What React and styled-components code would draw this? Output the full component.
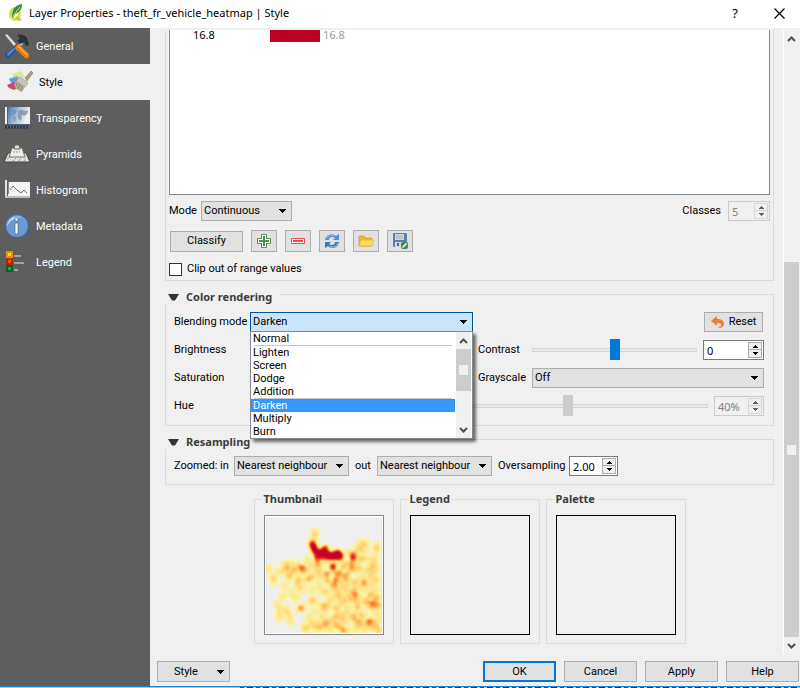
import React from "react";
import styled, { createGlobalStyle, css } from "styled-components";

const UI = `Roboto, "Liberation Sans", sans-serif`;
const WIDE = `"Noto Sans", "Open Sans", sans-serif`;

const Global = createGlobalStyle`
  * { box-sizing: border-box; }
  body { margin: 0; background: #f0f0f0; font: 11px/14px ${UI}; color: #000; }
  button, input, select { font: inherit; color: inherit; margin: 0; }
`;

const Window = styled.div`
  min-height: 100vh;
  display: flex;
  flex-direction: column;
  background: #f0f0f0;
  overflow: hidden;
`;

const TitleBar = styled.header`
  height: 28px;
  background: #fff;
  display: flex;
  align-items: center;
  padding: 0 13px 2px 8px;
`;
const TitleText = styled.h1`
  flex: 1;
  margin: 0 0 0 5px;
  font: 400 11px/16px ${WIDE};
  white-space: nowrap;
`;
const CaptionButton = styled.button`
  width: 16px;
  height: 20px;
  margin-left: 28px;
  padding: 0;
  border: 0;
  background: none;
  font: 400 13px/20px ${WIDE};
  display: grid;
  place-items: center;
`;

const Body = styled.div`
  flex: 1;
  display: flex;
`;
const Sidebar = styled.nav`
  width: 150px;
  flex: none;
  background: #5e5e5e;
`;
const NavItem = styled.button`
  width: 100%;
  height: 36px;
  border: 0;
  padding: 2px 0 0 ${(p) => (p.$active ? 7 : 4)}px;
  display: flex;
  align-items: center;
  gap: 6px;
  background: ${(p) => (p.$active ? "#f0f0f0" : "transparent")};
  color: ${(p) => (p.$active ? "#000" : "#fff")};
  text-align: left;
  svg { display: block; flex: none; margin-bottom: 2px; }
`;

const Main = styled.main`
  flex: 1;
  min-width: 0;
  display: flex;
  flex-direction: column;
`;
const ScrollArea = styled.div`
  flex: 1;
  display: flex;
  padding: 2px 1px 0 0;
`;
const Content = styled.div`
  flex: 1;
  min-width: 0;
  padding: 0 9px 10px 15px;
`;

const Panel = styled.section`
  border: 1px solid #dcdcdc;
  border-top: 0;
  padding: 0 3px 4px;
`;
const Classes = styled.div`
  height: 165px;
  background: #fff;
  border: 1px solid #828790;
  border-top: 0;
  display: flex;
  align-items: flex-start;
  padding-left: 23px;
  font-family: ${WIDE};
`;
const Value = styled.span`
  width: 77px;
  line-height: 10px;
`;
const Swatch = styled.span`
  width: 50px;
  height: 12px;
  background: #bd0026;
  margin-right: 3px;
`;
const ClassLabel = styled.span`
  color: #a0a0a0;
  line-height: 10px;
`;

const Row = styled.div`
  display: flex;
  align-items: center;
  margin-top: ${(p) => p.$top || 0}px;
  padding-left: ${(p) => p.$indent || 0}px;
  gap: ${(p) => p.$gap || 0}px;
`;
const Spacer = styled.span`
  flex: 1;
`;
const Label = styled.label`
  white-space: nowrap;
  width: ${(p) => (p.$w ? p.$w + "px" : "auto")};
  padding-left: ${(p) => p.$indent || 0}px;
`;

const buttonLook = css`
  background: #e1e1e1;
  border: 1px solid #adadad;
  border-radius: 0;
`;
const Button = styled.button`
  ${buttonLook}
  width: 73px;
  height: 21px;
  padding: 0;
  display: flex;
  align-items: center;
  justify-content: center;
  ${(p) => p.$primary && css`border: 2px solid #0078d7;`}
`;
const MenuButton = styled(Button)`
  justify-content: space-between;
  padding: 0 5px 0 16px;
`;
const IconButton = styled(Button)`
  width: 26px;
  height: 22px;
`;
const ResetButton = styled(Button)`
  width: 59px;
  height: 20px;
  gap: 5px;
`;

const SelectBox = styled.span`
  display: grid;
  width: ${(p) => (p.$w ? p.$w + "px" : "100%")};
  height: 20px;
  align-items: center;
  svg { grid-area: 1 / 1; justify-self: end; margin-right: 6px; pointer-events: none; }
`;
const NativeSelect = styled.select`
  grid-area: 1 / 1;
  ${buttonLook}
  appearance: none;
  width: 100%;
  height: 20px;
  padding: 0 14px 0 2px;
  line-height: 16px;
  ${(p) => p.$open && css`background: #cce4f7; border-color: #005499;`}
`;

const Check = styled.input`
  appearance: none;
  width: 13px;
  height: 13px;
  border: 1px solid #333;
  background: #fff;
`;

const SpinFrame = styled.span`
  width: ${(p) => p.$w}px;
  height: 20px;
  flex: none;
  display: flex;
  padding: 1px 1px 1px 2px;
  border: 1px solid ${(p) => (p.$off ? "#cccccc" : "#7a7a7a")};
  background: ${(p) => (p.$off ? "#f0f0f0" : "#fff")};
  color: ${(p) => (p.$off ? "#838383" : "#000")};
`;
const SpinInput = styled.input`
  flex: 1;
  min-width: 0;
  border: 0;
  padding: 2px 0 0 1px;
  background: transparent;
  font-family: ${WIDE};
`;
const SpinButtons = styled.span`
  width: 14px;
  display: grid;
  grid-template-rows: 1fr 1fr;
`;
const SpinButton = styled.button`
  border: 1px solid ${(p) => (p.disabled ? "#d6d6d6" : "#acacac")};
  background: #f0f0f0;
  padding: 0;
  display: grid;
  place-items: center;
  & + & { border-top: 0; }
`;

const GroupHeader = styled.div`
  height: 14px;
  margin-top: 9px;
  display: flex;
  align-items: center;
  padding-left: 3px;
`;
const Collapse = styled.button`
  border: 0;
  padding: 0;
  background: none;
  width: 18px;
  height: 14px;
  display: flex;
  align-items: center;
`;
const GroupTitle = styled.h2`
  margin: 0 8px 0 0;
  font: 700 11px/14px ${WIDE};
  color: #3c3c3c;
`;
const GroupLine = styled.span`
  flex: 1;
  height: 10px;
  align-self: flex-end;
  border: 1px solid #dcdcdc;
  border-width: 1px 1px 0 0;
`;
const GroupBody = styled.div`
  border: 1px solid #dcdcdc;
  border-top: 0;
  padding: ${(p) => p.$pad};
`;
const RenderGrid = styled.div`
  display: grid;
  grid-template-columns: 76px minmax(0, 223fr) 59px minmax(0, 232fr);
  grid-auto-rows: 20px;
  row-gap: 8px;
  align-items: center;
`;
const Combo = styled.div`
  position: relative;
`;
const Wide = styled.div`
  grid-column: ${(p) => p.$cols};
  display: flex;
  align-items: center;
  gap: 6px;
`;
const EndCell = styled.div`
  grid-column: 3 / 5;
  display: flex;
  justify-content: flex-end;
  padding-right: 1px;
`;

const Slider = styled.input`
  appearance: none;
  flex: 1;
  width: 100%;
  min-width: 0;
  height: 20px;
  background: none;
  &::-webkit-slider-runnable-track {
    height: 4px;
    background: #e7eaea;
    border: 1px solid #d6d6d6;
  }
  &::-webkit-slider-thumb {
    appearance: none;
    width: 10px;
    height: 21px;
    margin-top: -10px;
    background: ${(p) => (p.disabled ? "#cccccc" : "#007ad9")};
  }
`;

const Popup = styled.div`
  position: absolute;
  z-index: 2;
  top: 19px;
  left: 0;
  right: 0;
  display: flex;
  background: #fff;
  border: 1px solid #828790;
  padding-right: 1px;
  box-shadow: 3px 3px 3px rgba(0, 0, 0, 0.55);
`;
const Options = styled.ul`
  flex: 1;
  margin: 0;
  padding: 0 1px 0 0;
  list-style: none;
`;
const Option = styled.li`
  height: 13px;
  line-height: 13px;
  padding-left: 2px;
  ${(p) => p.$on && css`
    background: #3399ff;
    color: #fff;
    outline: 1px dotted #cc6600;
    outline-offset: -1px;
  `}
`;
const Separator = styled.li`
  height: 1px;
  margin: 0 3px;
  background: #c8c8c8;
`;
const Bar = styled.div`
  width: 15px;
  flex: none;
  display: flex;
  flex-direction: column;
  align-items: center;
  background: #f0f0f0;
`;
const PageBar = styled(Bar)`
  width: 16px;
  border-left: 1px solid #fff;
`;
const BarArrow = styled.button`
  width: 15px;
  height: 17px;
  padding: 0;
  border: 0;
  background: none;
  display: grid;
  place-items: center;
`;
const Thumb = styled.div`
  width: 15px;
  height: ${(p) => (p.$h ? p.$h + "px" : "auto")};
  flex: ${(p) => (p.$h ? "none" : p.$grow)};
  background: #cdcdcd;
  display: grid;
  place-items: center;
`;
const Track = styled.div`
  flex: ${(p) => p.$grow};
`;
const Grip = styled.span`
  width: 9px;
  height: 10px;
  background: #f0f0f0;
`;

const Previews = styled.div`
  display: flex;
  justify-content: center;
  gap: 6px;
  margin-top: 7px;
`;
const Preview = styled.fieldset`
  width: 140px;
  margin: 0;
  padding: 9px 9px 8px;
  border: 1px solid #dcdcdc;
  legend {
    font: 700 11px/14px ${WIDE};
    color: #3c3c3c;
    padding: 0 2px;
    margin-left: -2px;
  }
`;
const Canvas = styled.div`
  height: 120px;
  border: 1px solid ${(p) => (p.$soft ? "#828790" : "#000")};
  background: #f0f0f0;
  ${(p) => p.$soft && css`padding: 1px; background: #fff;`}
  svg { display: block; width: 100%; height: 100%; }
`;

const Footer = styled.footer`
  display: flex;
  gap: 8px;
  padding: 7px 1px 4px 7px;
`;
const BottomEdge = styled.div`
  height: 2px;
  border-top: 1px solid #1883d7;
  background: linear-gradient(90deg, #b9c9d6 0 240px, transparent 240px),
    repeating-linear-gradient(90deg, #3a444d 0 4px, #b9c9d6 4px 7px, #1c2228 7px 13px, #b9c9d6 13px 16px);
`;

const Down = () => (
  <svg width="7" height="4" viewBox="0 0 7 4" shapeRendering="crispEdges">
    <path d="M0 0h7v1H0zM1 1h5v1H1zM2 2h3v1H2zM3 3h1v1H3z" fill="#000" />
  </svg>
);
const Tiny = ({ up, color }) => (
  <svg width="5" height="3" viewBox="0 0 5 3" shapeRendering="crispEdges">
    <path d={up ? "M0 2h5v1H0zM1 1h3v1H1zM2 0h1v1H2z" : "M0 0h5v1H0zM1 1h3v1H1zM2 2h1v1H2z"} fill={color} />
  </svg>
);
const Chevron = ({ up }) => (
  <svg width="9" height="6" viewBox="0 0 9 6">
    <path d={up ? "M1 5l3.500-3.500L8 5" : "M1 1l3.500 3.500L8 1"} fill="none" stroke="#505050" strokeWidth="2" />
  </svg>
);

function Select({ id, w, value, open }) {
  return (
    <SelectBox $w={w}>
      <NativeSelect id={id} $open={open} defaultValue={value}>
        <option>{value}</option>
      </NativeSelect>
      <Down />
    </SelectBox>
  );
}

function Spin({ id, w, value, off, label }) {
  const color = off ? "#606060" : "#000";
  return (
    <SpinFrame $w={w} $off={off}>
      <SpinInput id={id} aria-label={label} defaultValue={value} disabled={off} />
      <SpinButtons>
        <SpinButton disabled={off} aria-label="Increase"><Tiny up color={color} /></SpinButton>
        <SpinButton disabled={off} aria-label="Decrease"><Tiny color={color} /></SpinButton>
      </SpinButtons>
    </SpinFrame>
  );
}

function Group({ title, pad, children }) {
  return (
    <section>
      <GroupHeader>
        <Collapse aria-label={"Collapse " + title}>
          <svg width="11" height="7" viewBox="0 0 11 7"><path d="M0 0h11L7 6.500H4z" fill="#333" /></svg>
        </Collapse>
        <GroupTitle>{title}</GroupTitle>
        <GroupLine />
      </GroupHeader>
      <GroupBody $pad={pad}>{children}</GroupBody>
    </section>
  );
}

const icons = {
  General: (
    <svg width="26" height="26" viewBox="0 0 26 26">
      <path d="M1 2l2-1 9 10-2 2z" fill="#e4e4e4" stroke="#888" strokeWidth=".5" />
      <path d="M17 9l2 2-7 7-2-2z" fill="#bdb8b0" />
      <path d="M13 2c5-1 8 0 10 3l2 7-3 1-2-4-4 2-3-3 3-3z" fill="#2d3030" />
      <path d="M10 14l3 3-8 8c-3 1-5-1-4-4z" fill="#1d5aa6" />
      <path d="M10 15l1 1-7 7-1-2z" fill="#5c93d2" />
      <path d="M12 13l3-2 10 10c1 3-1 5-4 4L11 15z" fill="#f07d0a" />
      <path d="M14 13l9 9" stroke="#ffb65c" strokeWidth="1.500" />
    </svg>
  ),
  Style: (
    <svg width="26" height="24" viewBox="0 0 26 24">
      <path d="M5 4l9-3 4 6-9 4z" fill="#dbe6a4" />
      <path d="M2 9l8-4 5 6-9 4z" fill="#b5cf94" />
      <path d="M2 9l8-2 4 6-8 3z" fill="#5f9fdf" />
      <path d="M0 15l7-3 6 5-6 3-5-2z" fill="#cf4a70" />
      <path d="M18 8l6-7 2 2-6 8z" fill="#a79e83" stroke="#8c8570" strokeWidth=".6" />
      <path d="M13 7l8 6-3 4-9-6z" fill="#cbc6b8" stroke="#908b7c" strokeWidth=".6" />
      <path d="M9 11l9 6-3 5c-4-1-7-4-8-7z" fill="#b3ae98" />
      <path d="M10 13l-1 3m4-2l-2 5m4-3l-1 4" stroke="#8a846e" />
    </svg>
  ),
  Transparency: (
    <svg width="26" height="24" viewBox="0 0 26 24">
      <defs>
        <linearGradient id="sky" x2="1" y2=".3"><stop stopColor="#4575b3" /><stop offset=".5" stopColor="#a9c1dd" /><stop offset="1" stopColor="#f1f3f5" /></linearGradient>
      </defs>
      <path d="M4 1h22v17H4z" fill="url(#sky)" />
      <path d="M6 5l5-1 2 1-2 3-2 1-3-2zM9 10l3 1-1 5h-1zM14 5l3-1 7 1-1 3-3 2-1-1-2 1 1 2-2 3-2-4z" fill="#7f90a6" fillOpacity=".8" />
      <path d="M2 1v17" stroke="#f2f2f2" strokeWidth="2" />
      <path d="M1 21h24" stroke="#273b58" strokeWidth="3" />
      <path d="M3 21h22" stroke="#8ca6c8" strokeDasharray="1 2" />
    </svg>
  ),
  Pyramids: (
    <svg width="26" height="20" viewBox="0 0 26 20">
      <path d="M4 9h18l4 9H0z" fill="#e2e0da" stroke="#454545" />
      <path d="M8 4h10l3 9H5z" fill="#eeede8" stroke="#77736b" />
      <path d="M11 1h4l1 4h-6z" fill="#e2e0da" stroke="#666" />
      <path d="M3 15l4-2m2 4l3-3m3 3l2-4m3 4l2-3M9 8h7" stroke="#918d83" strokeDasharray="2 1" />
    </svg>
  ),
  Histogram: (
    <svg width="26" height="20" viewBox="0 0 26 20">
      <path d="M4 2h22v14H4z" fill="#f4f4f3" />
      <path d="M2 0v17" stroke="#e1e1dd" strokeWidth="2" />
      <path d="M4.500 2v12" stroke="#888" />
      <path d="M1 17h25" stroke="#bdbdb9" strokeWidth="2" />
      <path d="M6 10l3-4 4 4 4 3 3-3 3 3" fill="none" stroke="#53779c" />
    </svg>
  ),
  Metadata: (
    <svg width="26" height="26" viewBox="0 0 26 26">
      <circle cx="13" cy="13" r="11.500" fill="#6d9ad0" stroke="#35679f" />
      <path d="M3 13C4 5 10 2 18 4 11 5 6 7 3 13z" fill="#c2d8ef" />
      <path d="M11 10h3v11h-3zM11 5h3v3h-3z" fill="#fff" stroke="#49678b" strokeWidth=".7" />
    </svg>
  ),
  Legend: (
    <svg width="26" height="24" viewBox="0 0 26 24">
      <path d="M3 2h5v5H3z" fill="#ffde00" stroke="#e5900c" strokeWidth="2" />
      <path d="M3 9h5v5H3z" fill="#ff4a00" stroke="#a62d0a" strokeWidth="2" />
      <path d="M3 16h5v5H3z" fill="#00b050" stroke="#0c5c33" strokeWidth="2" />
      <path d="M10 6h7M10 13h10M10 20h4" stroke="#a3a3a3" strokeWidth="2" />
    </svg>
  ),
};

const tools = [
  ["Add class", (
    <svg width="14" height="14" viewBox="0 0 14 14">
      <path d="M4.500.500h5v4h4v5h-4v4h-5v-4h-4v-5h4z" fill="#fff" stroke="#4f8f55" />
      <path d="M6 2h2v4h4v2H8v4H6V8H2V6h4z" fill="#4f8f55" />
    </svg>
  )],
  ["Remove class", (
    <svg width="14" height="14" viewBox="0 0 14 14">
      <path d="M.500 4.500h13v5H.500z" fill="#fff" stroke="#ee4b4f" />
      <path d="M2 6h10v2H2z" fill="#ee4b4f" />
    </svg>
  )],
  ["Refresh", (
    <svg width="16" height="16" viewBox="0 0 16 16">
      <path d="M1 7C1 2 8-1 12 3l3-2v6H9l2-2C8 3 5 4 5 7z" fill="#5790cf" />
      <path d="M15 9c0 5-7 8-11 4l-3 2V9h6l-2 2c3 2 6 1 6-2z" fill="#3c78b5" />
      <path d="M2 6c1-3 5-5 8-3M14 10c-1 3-5 5-8 3" fill="none" stroke="#9cc4ec" />
    </svg>
  )],
  ["Load from file", (
    <svg width="16" height="16" viewBox="0 0 16 16">
      <path d="M1 13V3h5l1 2h7v8z" fill="#eebd2e" stroke="#c89a3c" strokeWidth=".7" />
      <path d="M1 13L3 7h13l-2 6z" fill="#ffdc5a" stroke="#e3b33a" strokeWidth=".7" />
    </svg>
  )],
  ["Save to file", (
    <svg width="16" height="16" viewBox="0 0 16 16">
      <path d="M1 0h13l1 1v13H2l-1-1z" fill="#5882ae" />
      <path d="M3 1h9v6H3z" fill="#d6d9dc" />
      <path d="M4 3h7M4 5h7" stroke="#aaa" />
      <path d="M3 9h9v5H3z" fill="#d3d8dd" />
      <path d="M5 10h2v3H5z" fill="#4b6b8e" />
      <rect x="9" y="9" width="7" height="7" rx="2" fill="#4c8b4e" />
      <path d="M10.500 14.500l4-4" stroke="#fff" strokeWidth="1.500" />
    </svg>
  )],
];

/* Incident density samples on a 360-unit square */
const faint = [
  [12,160],[25,185],[30,198],[60,150],[75,145],[62,168],[90,170],[75,190],[60,215],[55,245],[80,235],[40,270],[45,290],[45,308],[65,285],[72,300],[78,320],[115,280],[105,282],[95,250],[125,200],[100,200],[140,190],[115,225],[145,225],[152,50],[152,65],[140,80],[130,135],[160,160],[165,210],[175,230],[150,255],[140,260],[170,270],[190,280],[175,295],[150,290],[135,310],[120,335],[125,350],[150,325],[160,345],[180,340],[200,350],[170,315],[195,315],[205,330],[225,335],[245,325],[250,350],[230,300],[215,285],[200,250],[190,230],[210,220],[235,230],[250,250],[240,270],[255,285],[265,310],[285,330],[300,345],[320,340],[340,345],[345,325],[325,315],[300,300],[280,290],[265,260],[285,245],[305,255],[300,225],[320,215],[340,225],[345,250],[350,275],[335,290],[315,275],[345,195],[330,180],[340,160],[320,155],[335,130],[338,105],[342,92],[330,145],[310,130],[305,100],[305,82],[290,85],[280,100],[290,110],[275,165],[260,200],[250,220],[290,190],[310,190],[280,215],[225,210],[205,205],[185,190],[175,170],[110,155],[95,150],[350,305],[350,350],[275,345],[185,140],[120,170],[100,215],[220,250],[220,275],[195,265],[45,170],[105,190],[150,175],[240,145],[250,185],[235,255],[325,240],[330,200],[320,170],[290,270],[310,325],[330,330],[245,300],[290,310],[215,315],[185,325],[140,335],[250,150],[285,135],[300,165],[240,205],[220,235],[260,240],[270,225],
];
const warm = [
  [70,160],[75,180],[88,165],[112,158],[115,168],[130,160],[135,190],[145,150],[165,185],[110,280],[180,275],[190,180],[205,165],[215,190],[240,190],[235,160],[255,170],[265,150],[295,130],[285,155],[300,205],[272,235],[275,255],[280,275],[320,240],[310,260],[325,275],[340,250],[345,270],[215,305],[235,315],[270,305],[290,325],[320,320],[235,345],[165,335],[275,320],[265,130],[190,200],[245,180],[185,330],[220,335],[255,110],[165,150],[210,212],[275,200],
];
const hot = [
  [190,175],[205,155],[215,175],[230,178],[220,190],[265,160],[270,130],[265,145],[302,205],[330,262],[335,270],[238,350],[315,323],[113,158],[225,172],[275,240],[215,200],[270,115],[160,142],[325,265],
];
const core = [
  [146,86],[150,96],[152,106],[158,116],[146,92],[152,102],[160,128],[170,118],[178,106],[186,116],[178,124],[190,122],[202,120],[212,116],[222,112],[230,122],[226,126],[214,126],[198,126],[184,100],[208,154],[268,124],[222,118],[205,124],[192,116],[216,120],[168,110],[220,122],[226,118],
];

function Heatmap() {
  const dots = (list, r, o) =>
    list.map(([x, y], i) => <circle key={o + "-" + i} cx={x} cy={y} r={r} fillOpacity={o} />);
  return (
    <svg viewBox="4 4 352 352" role="img" aria-label="Heatmap thumbnail">
      <defs>
        <filter id="heat" x="-10%" y="-10%" width="120%" height="120%" colorInterpolationFilters="sRGB">
          <feGaussianBlur stdDeviation="5" />
          <feColorMatrix values="0 0 0 1 0  0 0 0 1 0  0 0 0 1 0  0 0 0 0 1" />
          <feComponentTransfer>
            <feFuncR type="table" tableValues=".94 .98 .99 1 .99 .99 .98 .96 .92 .83 .74" />
            <feFuncG type="table" tableValues=".94 .95 .93 .87 .78 .66 .52 .36 .20 .06 0" />
            <feFuncB type="table" tableValues=".94 .68 .60 .50 .40 .30 .24 .17 .13 .14 .15" />
          </feComponentTransfer>
        </filter>
      </defs>
      <g filter="url(#heat)">
        <rect width="360" height="360" fillOpacity="0" />
        {dots(faint, 13, 0.22)}
        {dots(warm, 10, 0.26)}
        {dots(hot, 9, 0.36)}
        {dots(core, 11, 0.75)}
      </g>
    </svg>
  );
}

const modes = ["Normal", null, "Lighten", "Screen", "Dodge", "Addition", null, "Darken", "Multiply", "Burn"];

export default function App() {
  return (
    <Window>
      <Global />
      <TitleBar>
        <svg width="16" height="18" viewBox="0 0 16 18">
          <ellipse cx="7" cy="10" rx="4.500" ry="5.500" fill="none" stroke="#d6dc4a" strokeWidth="3" />
          <path d="M9 12l5 4-4 1-3-4z" fill="#b9c93a" />
          <path d="M4 12C4 6 7 1 14 0c0 5-2 8-7 10l-2 4z" fill="#3d8a3b" />
          <path d="M5 12L12 3" stroke="#b8dba0" />
        </svg>
        <TitleText>Layer Properties - theft_fr_vehicle_heatmap | Style</TitleText>
        <CaptionButton aria-label="Help">?</CaptionButton>
        <CaptionButton aria-label="Close">
          <svg width="11" height="11" viewBox="0 0 11 11"><path d="M.5.5l10 10M10.500.5l-10 10" stroke="#000" strokeWidth="1.200" /></svg>
        </CaptionButton>
      </TitleBar>
      <Body>
        <Sidebar>
          {Object.keys(icons).map((name) => (
            <NavItem key={name} $active={name === "Style"}>{icons[name]}{name}</NavItem>
          ))}
        </Sidebar>
        <Main>
          <ScrollArea>
            <Content>
              <Panel>
                <Classes>
                  <Value>16.8</Value><Swatch /><ClassLabel>16.8</ClassLabel>
                </Classes>
                <Row $top={6}>
                  <Label htmlFor="mode" $w={32}>Mode</Label>
                  <Select id="mode" w={91} value="Continuous" />
                  <Spacer />
                  <Row $gap={7}>
                    <Label htmlFor="classes">Classes</Label>
                    <Spin id="classes" w={42} value="5" off />
                  </Row>
                </Row>
                <Row $top={9} $gap={8} $indent={1}>
                  <Button>Classify</Button>
                  {tools.map(([name, icon]) => (
                    <IconButton key={name} aria-label={name}>{icon}</IconButton>
                  ))}
                </Row>
                <Row $top={10} $gap={5}>
                  <Check type="checkbox" id="clip" />
                  <Label htmlFor="clip">Clip out of range values</Label>
                </Row>
              </Panel>

              <Group title="Color rendering" pad="8px 9px 9px 8px">
                <RenderGrid>
                  <Label htmlFor="blend">Blending mode</Label>
                  <Combo>
                    <Select id="blend" value="Darken" open />
                    <Popup>
                      <Options role="listbox" aria-label="Blending modes">
                        {modes.map((m, i) =>
                          m ? <Option key={m} role="option" aria-selected={m === "Darken"} $on={m === "Darken"}>{m}</Option>
                            : <Separator key={i} role="presentation" />
                        )}
                      </Options>
                      <Bar>
                        <BarArrow aria-label="Scroll up"><Chevron up /></BarArrow>
                        <Thumb $h={42}><Grip /></Thumb>
                        <Track $grow={1} />
                        <BarArrow aria-label="Scroll down"><Chevron /></BarArrow>
                      </Bar>
                    </Popup>
                  </Combo>
                  <EndCell>
                    <ResetButton>
                      <svg width="13" height="12" viewBox="0 0 13 12">
                        <path d="M0 5l6-5v3c5 0 7 2 7 5 0 2-2 4-5 4l-1-1c2 0 3-1 3-2 0-2-2-2-4-2v3z" fill="#e5803c" />
                      </svg>
                      Reset
                    </ResetButton>
                  </EndCell>

                  <Label htmlFor="bright">Brightness</Label>
                  <Slider type="range" id="bright" />
                  <Label htmlFor="contrast" $indent={5}>Contrast</Label>
                  <Wide $cols="4">
                    <Slider type="range" id="contrast" defaultValue="50" />
                    <Spin w={61} value="0" label="Contrast value" />
                  </Wide>

                  <Label htmlFor="sat">Saturation</Label>
                  <Slider type="range" id="sat" />
                  <Label htmlFor="gray" $indent={5}>Grayscale</Label>
                  <Select id="gray" value="Off" />

                  <Label htmlFor="hue">Hue</Label>
                  <Wide $cols="2 / 5">
                    <Slider type="range" id="hue" disabled defaultValue="70" />
                    <Spin w={50} value="40%" label="Hue strength" off />
                  </Wide>
                </RenderGrid>
              </Group>

              <Group title="Resampling" pad="7px 9px 8px 8px">
                <Row>
                  <Label htmlFor="zin" $w={60}>Zoomed: in</Label>
                  <Select id="zin" w={115} value="Nearest neighbour" />
                  <Label htmlFor="zout" $w={28} $indent={6}>out</Label>
                  <Select id="zout" w={115} value="Nearest neighbour" />
                  <Label htmlFor="over" $w={77} $indent={6}>Oversampling</Label>
                  <Spin id="over" w={49} value="2.00" />
                </Row>
              </Group>

              <Previews>
                <Preview><legend>Thumbnail</legend><Canvas $soft><Heatmap /></Canvas></Preview>
                <Preview><legend>Legend</legend><Canvas /></Preview>
                <Preview><legend>Palette</legend><Canvas /></Preview>
              </Previews>
            </Content>
            <PageBar>
              <BarArrow aria-label="Scroll up"><Chevron up /></BarArrow>
              <Track $grow={215} />
              <Thumb $grow={375}><Grip /></Thumb>
              <BarArrow aria-label="Scroll down"><Chevron /></BarArrow>
            </PageBar>
          </ScrollArea>
          <Footer>
            <MenuButton>Style<Down /></MenuButton>
            <Spacer />
            <Button $primary>OK</Button>
            <Button>Cancel</Button>
            <Button>Apply</Button>
            <Button>Help</Button>
          </Footer>
        </Main>
      </Body>
      <BottomEdge />
    </Window>
  );
}
